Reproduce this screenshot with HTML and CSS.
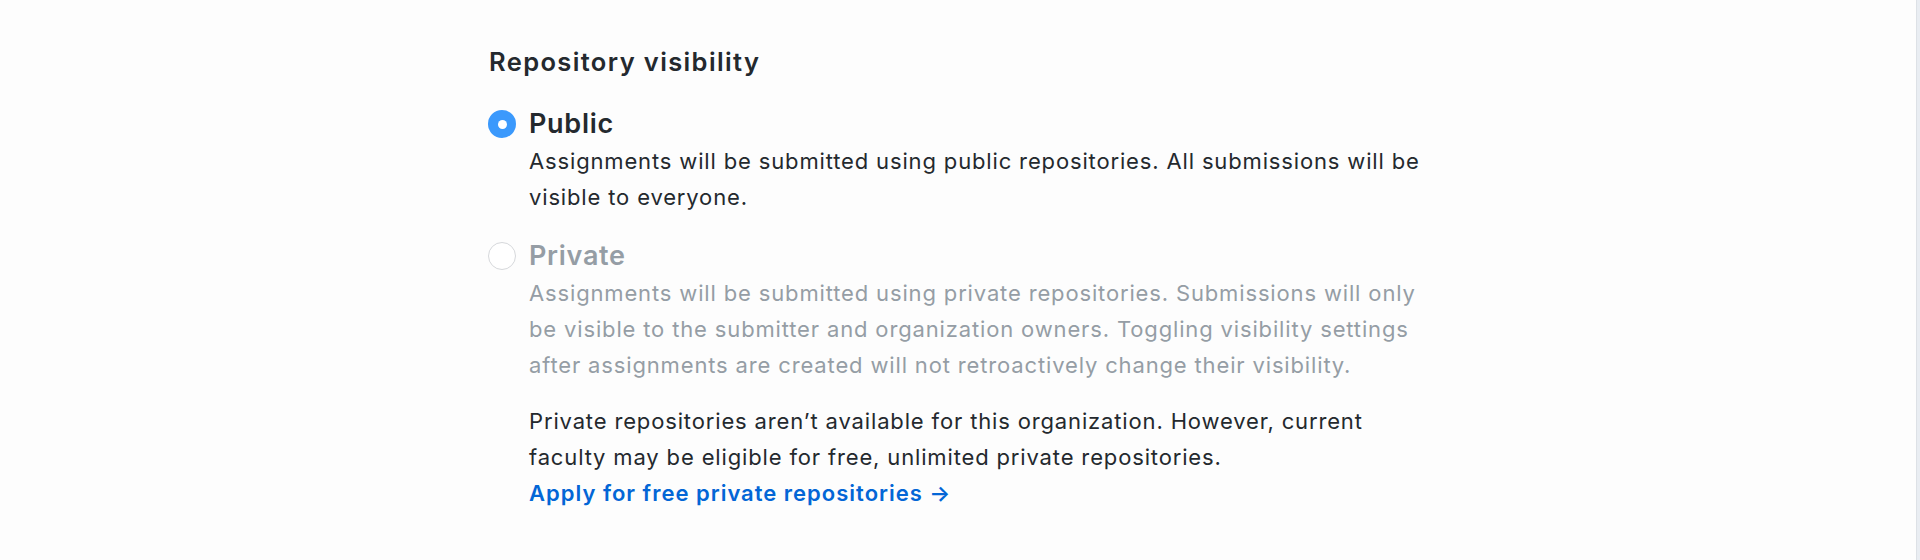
FILE: index.html
```html
<!DOCTYPE html>
<html lang="en">
<head>
<meta charset="utf-8">
<title>Repository visibility</title>
<link rel="stylesheet" href="styles.css">
</head>
<body>
<div class="page">
  <section class="visibility">
    <h2 class="heading">Repository visibility</h2>

    <div class="option">
      <div class="option-title">
        <span class="radio radio-checked"></span>
        <span class="label">Public</span>
      </div>
      <p class="desc">Assignments will be submitted using public repositories. All submissions will be<br>visible to everyone.</p>
    </div>

    <div class="option option-disabled">
      <div class="option-title">
        <span class="radio"></span>
        <span class="label">Private</span>
      </div>
      <p class="desc">Assignments will be submitted using private repositories. Submissions will only<br>be visible to the submitter and organization owners. Toggling visibility settings<br>after assignments are created will not retroactively change their visibility.</p>
    </div>

    <div class="notice">
      <p class="notice-text">Private repositories aren’t available for this organization. However, current<br>faculty may be eligible for free, unlimited private repositories.</p>
      <a class="notice-link" href="#">Apply for free private repositories →</a>
    </div>
  </section>
  <div class="scroll-strip"></div>
</div>
</body>
</html>
```

FILE: styles.css
```css
* { box-sizing: border-box; }

html, body {
  margin: 0;
  padding: 0;
  height: 100%;
}

body {
  background: #fdfdfd;
  font-family: Inter, "Noto Sans", "Liberation Sans", sans-serif;
  color: #24292e;
  -webkit-font-smoothing: antialiased;
}

.page {
  display: flex;
  height: 560px;
  overflow: hidden;
}

.visibility {
  flex: 1;
  padding: 46px 0 0 489px;
}

.heading {
  margin: 0;
  font-size: 25.5px;
  line-height: 32px;
  font-weight: 600;
  color: #24292e;
  letter-spacing: 1.37px;
}

.option {
  margin-top: 28px;
}

.option + .option {
  margin-top: 23px;
}

.option-title {
  display: flex;
  align-items: center;
  gap: 13px;
  margin-left: -1px;
}

.radio {
  width: 28px;
  height: 28px;
  border-radius: 50%;
  background: #fff;
  border: 1.5px solid #d6d8db;
  flex: none;
  position: relative;
}

.radio-checked {
  background: #3b99fc;
  border: none;
}

.radio-checked::after {
  content: "";
  position: absolute;
  left: 9.5px;
  top: 9.5px;
  width: 9px;
  height: 9px;
  border-radius: 50%;
  background: #fff;
}

.label {
  font-size: 27px;
  line-height: 36px;
  font-weight: 600;
  color: #24292e;
  letter-spacing: 0.7px;
}

.desc {
  margin: 1px 0 0 40px;
  font-size: 22px;
  line-height: 36px;
  color: #24292e;
  letter-spacing: 0.85px;
  white-space: nowrap;
}

.option-disabled .label,
.option-disabled .desc {
  color: #959da5;
}

.notice {
  margin: 20px 0 0 40px;
  font-size: 22px;
  line-height: 36px;
  letter-spacing: 0.85px;
}

.notice-text {
  margin: 0;
  white-space: nowrap;
}

.notice-link {
  color: #0366d6;
  font-weight: 600;
  letter-spacing: 1px;
  text-decoration: none;
}

.scroll-strip {
  width: 4px;
  flex: none;
  background: linear-gradient(to right, #dde1e6 0, #dde1e6 1px, #e9edf2 1px);
}
```
